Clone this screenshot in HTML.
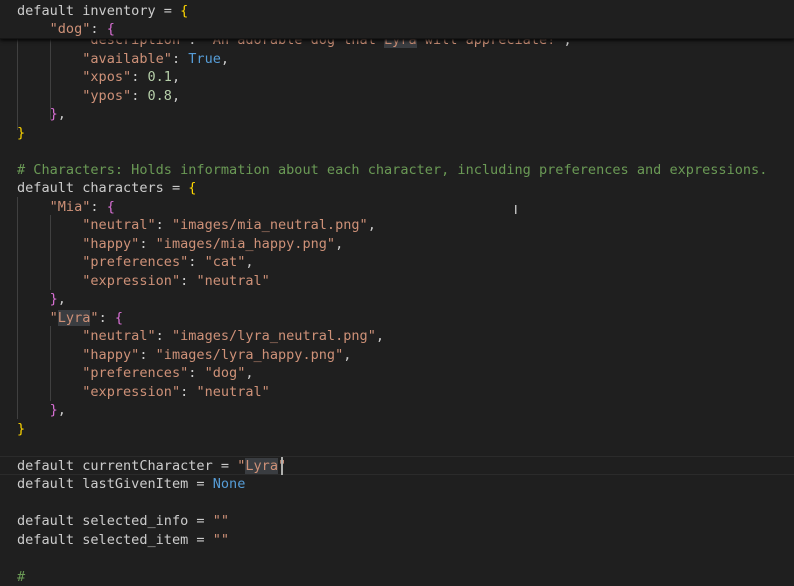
<!DOCTYPE html>
<html><head><meta charset="utf-8"><style>
body{margin:0;width:794px;height:575px;overflow:hidden;background:#1f1f1f;font-family:"DejaVu Sans Mono","Liberation Mono",monospace;font-size:13.55px;color:#cccccc;position:relative}
.code{position:absolute;left:17px;top:-5.8px;margin:0;white-space:pre;font:inherit;line-height:18.5px}
.s{color:#ce9178}.n{color:#b5cea8}.k{color:#569cd6}.c{color:#6a9955}.y{color:#ffd700}.p{color:#da70d6}
.h{background:#3a3d41}
.g{position:absolute;width:1px;background:#404040}
.sticky{position:absolute;left:0;top:0;width:794px;height:38px;background:#1f1f1f;box-shadow:0 2px 3px #0a0a0a;border-bottom:1px solid #151515}
.sticky pre{position:absolute;left:17px;top:1.5px;margin:0;font:inherit;line-height:18.5px;white-space:pre}
.cl{position:absolute;left:0;top:456px;width:794px;height:17px;border-top:1px solid #2b2b2b;border-bottom:1px solid #2b2b2b}
.cur{position:absolute;left:281px;top:457px;width:1.5px;height:18px;background:#aeafad}
</style></head><body>
<div class="g" style="left:17px;top:38px;height:92px"></div>
<div class="g" style="left:50px;top:38px;height:82px"></div>
<div class="g" style="left:17px;top:197px;height:222px"></div>
<div class="g" style="left:50px;top:215px;height:75px"></div>
<div class="g" style="left:50px;top:326px;height:75px"></div>
<div class="cl"></div>
<pre class="code">default inventory = <span class="y">{</span>
    <span class="s">"dog"</span>: <span class="p">{</span>
        <span class="s">"description"</span>: <span class="s">"An adorable dog that <span class="h">Lyra</span> will appreciate!"</span>,
        <span class="s">"available"</span>: <span class="k">True</span>,
        <span class="s">"xpos"</span>: <span class="n">0.1</span>,
        <span class="s">"ypos"</span>: <span class="n">0.8</span>,
    <span class="p">}</span>,
<span class="y">}</span>

<span class="c"># Characters: Holds information about each character, including preferences and expressions.</span>
default characters = <span class="y">{</span>
    <span class="s">"Mia"</span>: <span class="p">{</span>
        <span class="s">"neutral"</span>: <span class="s">"images/mia_neutral.png"</span>,
        <span class="s">"happy"</span>: <span class="s">"images/mia_happy.png"</span>,
        <span class="s">"preferences"</span>: <span class="s">"cat"</span>,
        <span class="s">"expression"</span>: <span class="s">"neutral"</span>
    <span class="p">}</span>,
    <span class="s">"<span class="h">Lyra</span>"</span>: <span class="p">{</span>
        <span class="s">"neutral"</span>: <span class="s">"images/lyra_neutral.png"</span>,
        <span class="s">"happy"</span>: <span class="s">"images/lyra_happy.png"</span>,
        <span class="s">"preferences"</span>: <span class="s">"dog"</span>,
        <span class="s">"expression"</span>: <span class="s">"neutral"</span>
    <span class="p">}</span>,
<span class="y">}</span>

default currentCharacter = <span class="s">"<span class="h">Lyra</span>"</span>
default lastGivenItem = <span class="k">None</span>

default selected_info = <span class="s">""</span>
default selected_item = <span class="s">""</span>

<span class="c">#</span></pre>
<div class="cur"></div>
<div class="sticky"><pre>default inventory = <span class="y">{</span>
    <span class="s">"dog"</span>: <span class="p">{</span></pre></div>
<div style="position:absolute;left:514px;top:203px;color:#ddd;font-family:'DejaVu Sans',sans-serif;font-size:12px;line-height:14px">I</div>
</body></html>
